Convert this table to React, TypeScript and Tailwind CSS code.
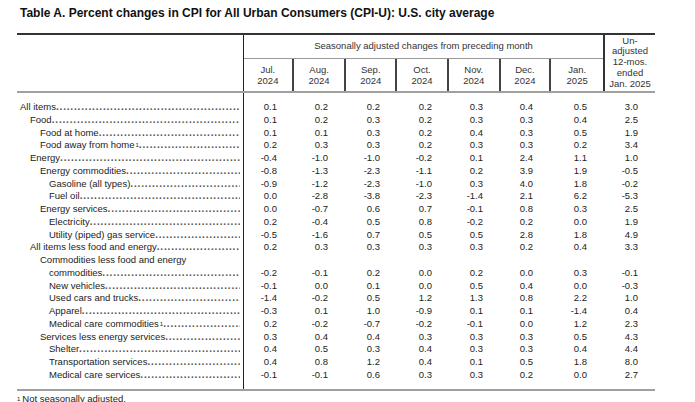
import React from "react";

type Row = { label: string; level: number; sup?: boolean; vals?: string[]; noLeader?: boolean };

const rows: Row[] = [
  { label: "All items", level: 0, vals: ["0.1", "0.2", "0.2", "0.2", "0.3", "0.4", "0.5", "3.0"] },
  { label: "Food", level: 1, vals: ["0.1", "0.2", "0.3", "0.2", "0.3", "0.3", "0.4", "2.5"] },
  { label: "Food at home", level: 2, vals: ["0.1", "0.1", "0.3", "0.2", "0.4", "0.3", "0.5", "1.9"] },
  { label: "Food away from home", level: 2, sup: true, vals: ["0.2", "0.3", "0.3", "0.2", "0.3", "0.3", "0.2", "3.4"] },
  { label: "Energy", level: 1, vals: ["-0.4", "-1.0", "-1.0", "-0.2", "0.1", "2.4", "1.1", "1.0"] },
  { label: "Energy commodities", level: 2, vals: ["-0.8", "-1.3", "-2.3", "-1.1", "0.2", "3.9", "1.9", "-0.5"] },
  { label: "Gasoline (all types)", level: 3, vals: ["-0.9", "-1.2", "-2.3", "-1.0", "0.3", "4.0", "1.8", "-0.2"] },
  { label: "Fuel oil", level: 3, vals: ["0.0", "-2.8", "-3.8", "-2.3", "-1.4", "2.1", "6.2", "-5.3"] },
  { label: "Energy services", level: 2, vals: ["0.0", "-0.7", "0.6", "0.7", "-0.1", "0.8", "0.3", "2.5"] },
  { label: "Electricity", level: 3, vals: ["0.2", "-0.4", "0.5", "0.8", "-0.2", "0.2", "0.0", "1.9"] },
  { label: "Utility (piped) gas service", level: 3, vals: ["-0.5", "-1.6", "0.7", "0.5", "0.5", "2.8", "1.8", "4.9"] },
  { label: "All items less food and energy", level: 1, vals: ["0.2", "0.3", "0.3", "0.3", "0.3", "0.2", "0.4", "3.3"] },
  { label: "Commodities less food and energy", level: 2, noLeader: true },
  { label: "commodities", level: 3, vals: ["-0.2", "-0.1", "0.2", "0.0", "0.2", "0.0", "0.3", "-0.1"] },
  { label: "New vehicles", level: 3, vals: ["-0.1", "0.0", "0.1", "0.0", "0.5", "0.4", "0.0", "-0.3"] },
  { label: "Used cars and trucks", level: 3, vals: ["-1.4", "-0.2", "0.5", "1.2", "1.3", "0.8", "2.2", "1.0"] },
  { label: "Apparel", level: 3, vals: ["-0.3", "0.1", "1.0", "-0.9", "0.1", "0.1", "-1.4", "0.4"] },
  { label: "Medical care commodities", level: 3, sup: true, vals: ["0.2", "-0.2", "-0.7", "-0.2", "-0.1", "0.0", "1.2", "2.3"] },
  { label: "Services less energy services", level: 2, vals: ["0.3", "0.4", "0.4", "0.3", "0.3", "0.3", "0.5", "4.3"] },
  { label: "Shelter", level: 3, vals: ["0.4", "0.5", "0.3", "0.4", "0.3", "0.3", "0.4", "4.4"] },
  { label: "Transportation services", level: 3, vals: ["0.4", "0.8", "1.2", "0.4", "0.1", "0.5", "1.8", "8.0"] },
  { label: "Medical care services", level: 3, vals: ["-0.1", "-0.1", "0.6", "0.3", "0.3", "0.2", "0.0", "2.7"] },
];

const levelPad = ["pl-[3px]", "pl-[13px]", "pl-[23px]", "pl-[32px]"];

const colW = ["w-[50px]", "w-[53px]", "w-[51px]", "w-[52px]", "w-[52px]", "w-[51px]", "w-[52px]", "w-[50px]"];
const colPr = ["pr-[17px]", "pr-[19px]", "pr-[18px]", "pr-[18px]", "pr-[19px]", "pr-[20px]", "pr-[18px]", "pr-[17px]"];

const months = [
  ["Jul.", "2024"],
  ["Aug.", "2024"],
  ["Sep.", "2024"],
  ["Oct.", "2024"],
  ["Nov.", "2024"],
  ["Dec.", "2024"],
  ["Jan.", "2025"],
];

const DOTS = Array.from({ length: 80 }, () => ".").join("\u200A");

function Sup() {
  return <sup className="text-[6px] relative -top-[1px] ml-[1px]">1</sup>;
}

export default function App() {
  return (
    <div className="w-[695px] h-[402px] overflow-hidden bg-white text-[#222] font-['Liberation_Sans',Arial,sans-serif]">
      <div className="pl-[20px] pt-[5px] text-[12px] leading-[16px] font-bold text-[#111] whitespace-nowrap">
        Table A. Percent changes in CPI for All Urban Consumers (CPI-U): U.S. city average
      </div>

      <div className="ml-[17px] mt-[12px] w-[638px] border-t-2 border-[#333] text-[9.5px]">
        {/* Header */}
        <div className="flex h-[58px] border-b-2 border-[#a0a0a0]">
          <div className="w-[227px] border-r border-[#222]" />
          <div className="w-[361px] flex flex-col border-r-2 border-[#333]">
            <div className="h-[24px] border-b border-[#999] flex items-center justify-center text-[#333]">
              Seasonally adjusted changes from preceding month
            </div>
            <div className="flex flex-1">
              {months.map((m, i) => (
                <div
                  key={i}
                  className={`${colW[i]} flex flex-col items-center justify-center leading-[11px] text-[#333] ${
                    i < 6 ? "border-r-2 border-[#444]" : ""
                  }`}
                >
                  <span>{m[0]}</span>
                  <span>{m[1]}</span>
                </div>
              ))}
            </div>
          </div>
          <div className="flex-1 flex flex-col items-center justify-center leading-[10.7px] text-[#333] pb-[1px]">
            <span>Un-</span>
            <span>adjusted</span>
            <span>12-mos.</span>
            <span>ended</span>
            <span className="whitespace-nowrap">Jan. 2025</span>
          </div>
        </div>

        {/* Body */}
        <div className="flex flex-col border-b-2 border-[#a0a0a0]">
          <div className="flex h-[8px]">
            <div className="w-[227px] border-r border-[#222]" />
          </div>
          {rows.map((r, idx) => (
            <div key={idx} className="flex h-[12.75px] leading-[12.75px]">
              <div className={`w-[227px] shrink-0 border-r border-[#222] pr-[3px] flex ${levelPad[r.level]}`}>
                <span className="whitespace-nowrap shrink-0">
                  {r.label}
                  {r.sup ? <Sup /> : null}
                </span>
                {r.noLeader ? null : (
                  <span className="block grow basis-0 min-w-0 overflow-hidden whitespace-nowrap text-[#555] text-[10px] font-bold">
                    {DOTS}
                  </span>
                )}
              </div>
              {r.vals
                ? r.vals.map((v, i) => (
                    <div key={i} className={`${colW[i]} shrink-0 ${colPr[i]} text-right whitespace-nowrap`}>
                      {v}
                    </div>
                  ))
                : null}
            </div>
          ))}
          <div className="flex h-[7.5px]">
            <div className="w-[227px] border-r border-[#222]" />
          </div>
        </div>
        <div className="pt-[2px] text-[9.5px] leading-[12px] whitespace-nowrap">
          <sup className="text-[6px] relative -top-[1px] mr-[2px]">1</sup>Not seasonally adjusted.
        </div>
      </div>
    </div>
  );
}
